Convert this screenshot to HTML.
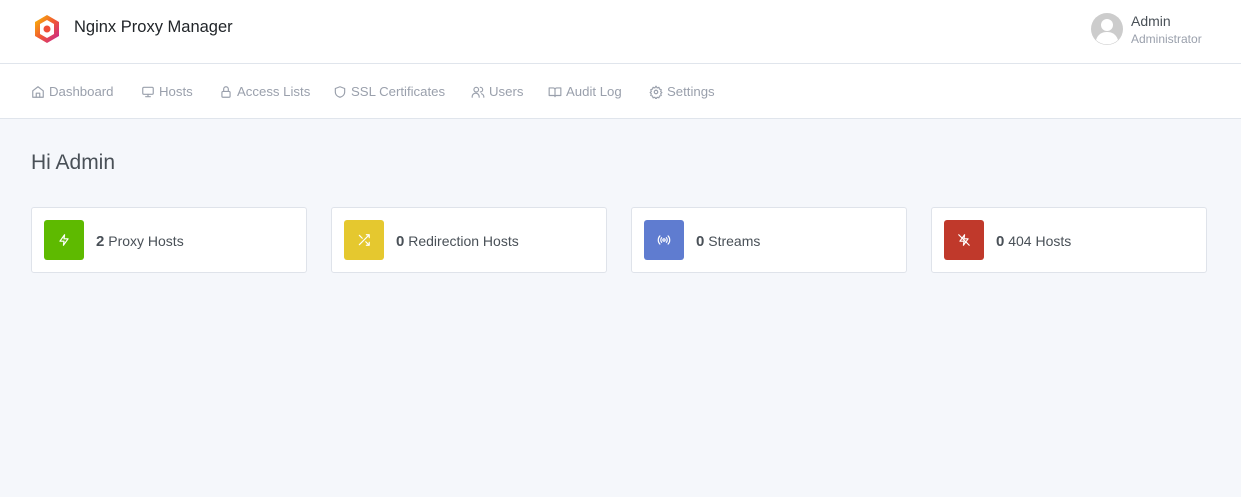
<!DOCTYPE html>
<html><head><meta charset="utf-8"><style>
*{margin:0;padding:0;box-sizing:border-box}
body{width:1241px;height:497px;background:#f5f7fb;font-family:"Liberation Sans",sans-serif;color:#495057;overflow:hidden;position:relative}
.hdr{position:absolute;left:0;top:0;width:1241px;height:64px;background:#fff;border-bottom:1px solid #e0e5ec}
.nav{position:absolute;left:0;top:64px;width:1241px;height:55px;background:#fff;border-bottom:1px solid #e0e5ec}
.brand{position:absolute;left:74px;top:18px;font-size:16.5px;color:#212529}
.ni{position:absolute;top:84px;font-size:13.2px;color:#9aa0ac;display:flex;align-items:center;gap:4px;white-space:nowrap}
.ni svg{width:14px;height:14px;fill:none;stroke:#9aa0ac;stroke-width:2;stroke-linecap:round;stroke-linejoin:round}
h1{position:absolute;left:31px;top:151px;font-size:21px;font-weight:normal;color:#495057}
.card{position:absolute;top:207px;width:276px;height:66px;background:#fff;border:1px solid #dfe3ea;border-radius:3px}
.ic{position:absolute;left:12px;top:12px;width:40px;height:40px;border-radius:3px;display:flex;align-items:center;justify-content:center}
.ic svg{width:14px;height:14px;fill:none;stroke:#fff;stroke-width:2;stroke-linecap:round;stroke-linejoin:round}
.ct{position:absolute;left:64px;top:25px;font-size:14px;color:#495057;white-space:nowrap}
.ct b{font-size:15px;color:#495057}
</style></head><body>
<div class="hdr">
<svg style="position:absolute;left:33px;top:14px" width="28" height="30" viewBox="0 0 28 30">
<defs><linearGradient id="g" x1="0" y1="0" x2="1" y2="1"><stop offset="0" stop-color="#f8c100"/><stop offset=".5" stop-color="#f15833"/><stop offset="1" stop-color="#c3209e"/></linearGradient></defs>
<polygon points="14,1 26,8 26,22 14,29 2,22 2,8" fill="url(#g)"/>
<polygon points="14,6 21,10 21,20 14,24 7,20 7,10" fill="#fff"/>
<circle cx="14" cy="15" r="3.5" fill="#f04e37"/>
</svg>
<div class="brand">Nginx Proxy Manager</div>
<svg style="position:absolute;left:1091px;top:13px" width="32" height="32" viewBox="0 0 32 32"><circle cx="16" cy="16" r="16" fill="#ccc"/><circle cx="16" cy="12" r="6" fill="#fff"/><path d="M5 27c2-6 6-8 11-8s9 2 11 8a16 16 0 0 1-22 0z" fill="#fff"/></svg>
<div style="position:absolute;left:1131px;top:13px;font-size:14px;color:#495057">Admin</div>
<div style="position:absolute;left:1131px;top:32px;font-size:12px;color:#9aa0ac">Administrator</div>
</div>
<div class="nav"></div>
<div class="ni" style="left:31px"><svg viewBox="0 0 24 24"><path d="M3 10l9-7 9 7v11H3z"/><path d="M9 21v-7h6v7"/></svg>Dashboard</div>
<div class="ni" style="left:141px"><svg viewBox="0 0 24 24"><rect x="3" y="4" width="18" height="12" rx="2"/><path d="M8 20h8M12 16v4"/></svg>Hosts</div>
<div class="ni" style="left:219px"><svg viewBox="0 0 24 24"><rect x="5" y="11" width="14" height="10" rx="2"/><path d="M8 11V7a4 4 0 0 1 8 0v4"/></svg>Access Lists</div>
<div class="ni" style="left:333px"><svg viewBox="0 0 24 24"><path d="M12 3l8 3v6c0 5-4 8-8 9-4-1-8-4-8-9V6z"/></svg>SSL Certificates</div>
<div class="ni" style="left:471px"><svg viewBox="0 0 24 24"><circle cx="9" cy="8" r="4"/><path d="M2 21v-1a6 6 0 0 1 12 0v1M16 4a4 4 0 0 1 0 8M22 21v-1a6 6 0 0 0-4-5"/></svg>Users</div>
<div class="ni" style="left:548px"><svg viewBox="0 0 24 24"><path d="M2 5h7a3 3 0 0 1 3 3v12a2 2 0 0 0-2-2H2zM22 5h-7a3 3 0 0 0-3 3v12a2 2 0 0 1 2-2h8z"/></svg>Audit Log</div>
<div class="ni" style="left:649px"><svg viewBox="0 0 24 24"><circle cx="12" cy="12" r="3"/><path d="M12 2l2 3 3-1 1 3 3 1-1 3 2 2-2 2 1 3-3 1-1 3-3-1-2 3-2-3-3 1-1-3-3-1 1-3-2-2 2-2-1-3 3-1 1-3 3 1z"/></svg>Settings</div>
<h1>Hi Admin</h1>
<div class="card" style="left:31px"><div class="ic" style="background:#5eba00"><svg viewBox="0 0 24 24"><path d="M13 3L5 14h7l-1 7 8-11h-7z"/></svg></div><div class="ct"><b>2</b> Proxy Hosts</div></div>
<div class="card" style="left:331px"><div class="ic" style="background:#e5c82f"><svg viewBox="0 0 24 24"><path d="M16 3h5v5M4 20L21 3M21 16v5h-5M15 15l6 6M4 4l5 5"/></svg></div><div class="ct"><b>0</b> Redirection Hosts</div></div>
<div class="card" style="left:631px"><div class="ic" style="background:#5f7cd0"><svg viewBox="0 0 24 24"><circle cx="12" cy="12" r="2"/><path d="M16 8a6 6 0 0 1 0 8M8 16a6 6 0 0 1 0-8M19 5a10 10 0 0 1 0 14M5 19A10 10 0 0 1 5 5"/></svg></div><div class="ct"><b>0</b> Streams</div></div>
<div class="card" style="left:931px"><div class="ic" style="background:#c0392b"><svg viewBox="0 0 24 24"><path d="M13 3L5 14h7l-1 7 8-11h-7zM3 3l18 18"/></svg></div><div class="ct"><b>0</b> 404 Hosts</div></div>
</body></html>
